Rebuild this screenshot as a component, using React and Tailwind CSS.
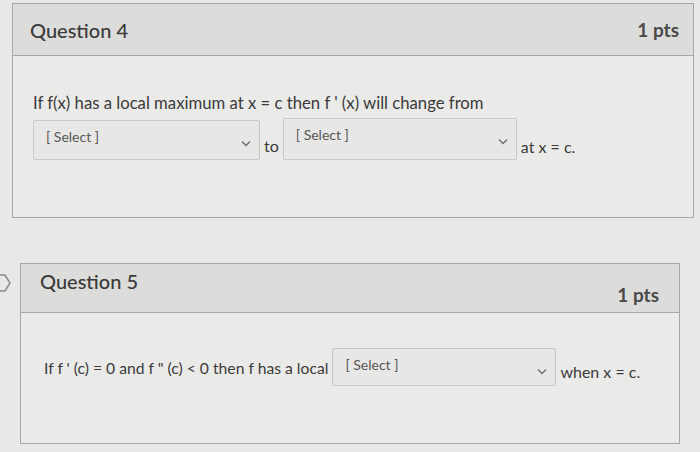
import React from "react";

function Chevron() {
  return (
    <svg width="10" height="7" viewBox="0 0 10 7" className="shrink-0">
      <path d="M1 1.5 L5 5.5 L9 1.5" fill="none" stroke="#6b6b6b" strokeWidth="1.3" />
    </svg>
  );
}

function Select({ w, h = 40 }) {
  return (
    <div
      className="flex items-start justify-between border border-[#c9c9c7] bg-[#e7e7e5] rounded-[2px] pl-[12px] pr-[8px] pt-[7px] shrink-0"
      style={{ width: w, height: h }}
    >
      <span className="text-[14px] text-[#575757] leading-[18px]">[ Select ]</span>
      <div className="mt-[12px]"><Chevron /></div>
    </div>
  );
}

export default function App() {
  return (
    <div
      className="w-[700px] h-[452px] overflow-hidden bg-[#e8e8e6] relative text-[#3b3b3b]"
      style={{ fontFamily: "Lato, 'Open Sans', sans-serif" }}
    >
      <div className="pt-[3px] pl-[12px]">
        {/* Question 4 */}
        <div className="w-[682px] border border-[#a8a8a6] bg-[#eaeae8]">
          <div className="h-[52px] bg-[#dcdcda] border-b border-[#a8a8a6] flex items-center justify-between pl-[17px] pr-[14px]">
            <span className="text-[20px] font-medium text-[#3a3a3a]">Question 4</span>
            <span className="text-[19px] font-bold text-[#4a4a4a] mt-[2px]">1 pts</span>
          </div>
          <div className="h-[161px] pl-[20px] pt-[36px]">
            <p className="text-[16.7px] leading-[22px] text-[#3a3a3a]">
              If f(x) has a local maximum at x = c then f ' (x) will change from
            </p>
            <div className="flex items-end mt-[3px]">
              <Select w={227} h={40} />
              <span className="text-[16px] mx-[4px] mb-[2px]">to</span>
              <div className="mt-[1px]"><Select w={234} h={42} /></div>
              <span className="text-[16px] ml-[4px] mb-[1px]">at x = c.</span>
            </div>
          </div>
        </div>

        {/* Question 5 */}
        <div className="mt-[45px] ml-[8px] w-[660px] border border-[#a8a8a6] bg-[#eaeae8]">
          <div className="h-[49px] bg-[#dcdcda] border-b border-[#a8a8a6] flex items-start justify-between pl-[19px] pr-[20px]">
            <span className="text-[20px] font-medium text-[#3a3a3a] mt-[2px]">Question 5</span>
            <span className="text-[19px] font-bold text-[#4a4a4a] mt-[17px]">1 pts</span>
          </div>
          <div className="h-[130px] pl-[23px] pt-[35px]">
            <div className="flex items-center">
              <span className="text-[15.7px] mt-[4px]">If f ' (c) = 0 and f " (c) &lt; 0 then f has a local</span>
              <div className="ml-[4px]"><Select w={224} h={38} /></div>
              <span className="text-[16px] ml-[4px] mt-[10px]">when x = c.</span>
            </div>
          </div>
        </div>
      </div>

      <svg className="absolute left-[-8px] top-[274px]" width="20" height="18" viewBox="0 0 20 18">
        <path d="M5 1 L13 1 L18 9 L13 17 L5 17" fill="none" stroke="#8a8a8a" strokeWidth="1.5" />
      </svg>
    </div>
  );
}
